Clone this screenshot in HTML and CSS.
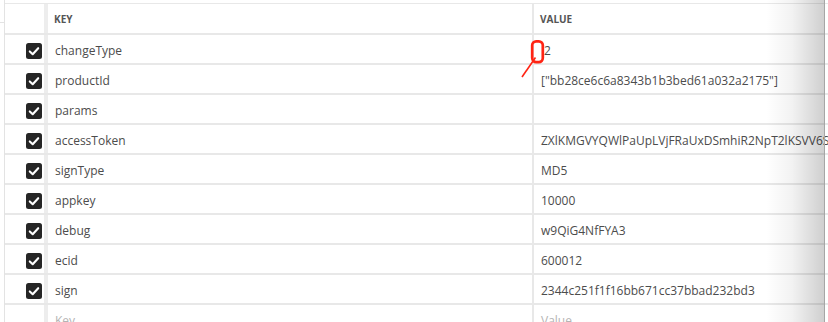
FILE: index.html
```html
<!DOCTYPE html>
<html>
<head>
<meta charset="utf-8">
<link rel="stylesheet" href="styles.css">
</head>
<body>
<div class="frame">
  <div class="side"><div class="side-tick"></div></div>
  <div class="table">
    <div class="row head">
      <div class="cell cb"></div>
      <div class="cell key">Key</div>
      <div class="cell val">Value</div>
    </div>
    <div class="row">
      <div class="cell cb"><span class="check"><svg viewBox="0 0 16 16" width="16" height="16"><rect x="0" y="0" width="16" height="16" rx="2.5" fill="#262626"/><polyline points="3.8,8.4 6.7,11.2 12.2,5.2" fill="none" stroke="#fff" stroke-width="2.1" stroke-linecap="round" stroke-linejoin="round"/></svg></span></div>
      <div class="cell key">changeType</div>
      <div class="cell val pre"> 2</div>
    </div>
    <div class="row">
      <div class="cell cb"><span class="check"><svg viewBox="0 0 16 16" width="16" height="16"><rect x="0" y="0" width="16" height="16" rx="2.5" fill="#262626"/><polyline points="3.8,8.4 6.7,11.2 12.2,5.2" fill="none" stroke="#fff" stroke-width="2.1" stroke-linecap="round" stroke-linejoin="round"/></svg></span></div>
      <div class="cell key">productId</div>
      <div class="cell val">["bb28ce6c6a8343b1b3bed61a032a2175"]</div>
    </div>
    <div class="row">
      <div class="cell cb"><span class="check"><svg viewBox="0 0 16 16" width="16" height="16"><rect x="0" y="0" width="16" height="16" rx="2.5" fill="#262626"/><polyline points="3.8,8.4 6.7,11.2 12.2,5.2" fill="none" stroke="#fff" stroke-width="2.1" stroke-linecap="round" stroke-linejoin="round"/></svg></span></div>
      <div class="cell key">params</div>
      <div class="cell val"></div>
    </div>
    <div class="row">
      <div class="cell cb"><span class="check"><svg viewBox="0 0 16 16" width="16" height="16"><rect x="0" y="0" width="16" height="16" rx="2.5" fill="#262626"/><polyline points="3.8,8.4 6.7,11.2 12.2,5.2" fill="none" stroke="#fff" stroke-width="2.1" stroke-linecap="round" stroke-linejoin="round"/></svg></span></div>
      <div class="cell key">accessToken</div>
      <div class="cell val">ZXlKMGVYQWlPaUpLVjFRaUxDSmhiR2NpT2lKSVV6STFOaUo5LmV5SnpkV0lpT2lJeE1qTTBOVFkzT0Rrd0lpd2libUZ0WlNJNklrcHZhRzRnUkc5bElpd2lhV0YwSWpveE5URTJNak01TURJeWZR</div>
    </div>
    <div class="row">
      <div class="cell cb"><span class="check"><svg viewBox="0 0 16 16" width="16" height="16"><rect x="0" y="0" width="16" height="16" rx="2.5" fill="#262626"/><polyline points="3.8,8.4 6.7,11.2 12.2,5.2" fill="none" stroke="#fff" stroke-width="2.1" stroke-linecap="round" stroke-linejoin="round"/></svg></span></div>
      <div class="cell key">signType</div>
      <div class="cell val">MD5</div>
    </div>
    <div class="row">
      <div class="cell cb"><span class="check"><svg viewBox="0 0 16 16" width="16" height="16"><rect x="0" y="0" width="16" height="16" rx="2.5" fill="#262626"/><polyline points="3.8,8.4 6.7,11.2 12.2,5.2" fill="none" stroke="#fff" stroke-width="2.1" stroke-linecap="round" stroke-linejoin="round"/></svg></span></div>
      <div class="cell key">appkey</div>
      <div class="cell val">10000</div>
    </div>
    <div class="row">
      <div class="cell cb"><span class="check"><svg viewBox="0 0 16 16" width="16" height="16"><rect x="0" y="0" width="16" height="16" rx="2.5" fill="#262626"/><polyline points="3.8,8.4 6.7,11.2 12.2,5.2" fill="none" stroke="#fff" stroke-width="2.1" stroke-linecap="round" stroke-linejoin="round"/></svg></span></div>
      <div class="cell key">debug</div>
      <div class="cell val">w9QiG4NfFYA3</div>
    </div>
    <div class="row">
      <div class="cell cb"><span class="check"><svg viewBox="0 0 16 16" width="16" height="16"><rect x="0" y="0" width="16" height="16" rx="2.5" fill="#262626"/><polyline points="3.8,8.4 6.7,11.2 12.2,5.2" fill="none" stroke="#fff" stroke-width="2.1" stroke-linecap="round" stroke-linejoin="round"/></svg></span></div>
      <div class="cell key">ecid</div>
      <div class="cell val">600012</div>
    </div>
    <div class="row">
      <div class="cell cb"><span class="check"><svg viewBox="0 0 16 16" width="16" height="16"><rect x="0" y="0" width="16" height="16" rx="2.5" fill="#262626"/><polyline points="3.8,8.4 6.7,11.2 12.2,5.2" fill="none" stroke="#fff" stroke-width="2.1" stroke-linecap="round" stroke-linejoin="round"/></svg></span></div>
      <div class="cell key">sign</div>
      <div class="cell val">2344c251f1f16bb671cc37bbad232bd3</div>
    </div>
    <div class="row placeholder">
      <div class="cell cb"></div>
      <div class="cell key">Key</div>
      <div class="cell val">Value</div>
    </div>
  </div>
  <div class="fade"></div>
  <svg class="annot" width="828" height="322" viewBox="0 0 828 322">
    <rect x="532.2" y="41.3" width="10.6" height="20.8" rx="4" fill="none" stroke="#ff2414" stroke-width="2.7"/>
    <line x1="522" y1="77" x2="535.5" y2="57.5" stroke="#ff2414" stroke-width="1.6"/>
  </svg>
</div>
</body>
</html>
```

FILE: styles.css
```css
html, body {
  margin: 0;
  padding: 0;
  background: #ffffff;
}

body {
  width: 828px;
  height: 322px;
  overflow: hidden;
  font-family: "Open Sans", "Liberation Sans", sans-serif;
  font-size: 12px;
  color: #4c4c4c;
}

.frame {
  position: relative;
  display: flex;
  width: 828px;
  height: 322px;
  overflow: hidden;
}

.side {
  flex: 0 0 4px;
  border-right: 1px solid #e3e3e3;
  padding-top: 22px;
  box-sizing: content-box;
}

.side-tick {
  height: 1px;
  background: #e3e3e3;
}

.table {
  flex: 1 1 auto;
  min-width: 0;
  margin-top: 3px;
  border-top: 1px solid #e8e8e8;
  overflow: hidden;
}

.row {
  display: grid;
  grid-template-columns: 43px 486px 1fr;
  height: 30px;
  border-bottom: 2px solid #e8e8e8;
  box-sizing: border-box;
}

.row.head {
  height: 31px;
}

.cell {
  box-sizing: border-box;
  white-space: nowrap;
  overflow: hidden;
  line-height: 25px;
  padding-top: 3px;
  padding-left: 7px;
}

.cell.cb {
  display: flex;
  justify-content: flex-end;
  align-items: flex-start;
  padding: 8px 2px 0 0;
  border-right: 4px solid #ededed;
}

.cell.key {
  border-right: 2px solid #e8e8e8;
}

.cell.pre {
  white-space: pre;
}

.check {
  display: block;
  width: 16px;
  height: 16px;
}

.check svg {
  display: block;
}

.head .cell {
  font-size: 10px;
  font-weight: 700;
  text-transform: uppercase;
  color: #555555;
  line-height: 27px;
  padding-top: 2px;
  padding-left: 6px;
}

.head .cell.cb {
  padding: 0;
}

.placeholder .cell {
  color: #b4b4b4;
}

.placeholder .cell.cb {
  padding: 0;
}

.fade {
  position: absolute;
  top: 0;
  bottom: 0;
  right: 3px;
  width: 58px;
  background: linear-gradient(to right, rgba(0, 0, 0, 0) 0%, rgba(0, 0, 0, 0.05) 45%, rgba(0, 0, 0, 0.19) 100%);
  border-right: 1px solid #a6a6a6;
  pointer-events: none;
}

.annot {
  position: absolute;
  left: 0;
  top: 0;
  pointer-events: none;
}
```
